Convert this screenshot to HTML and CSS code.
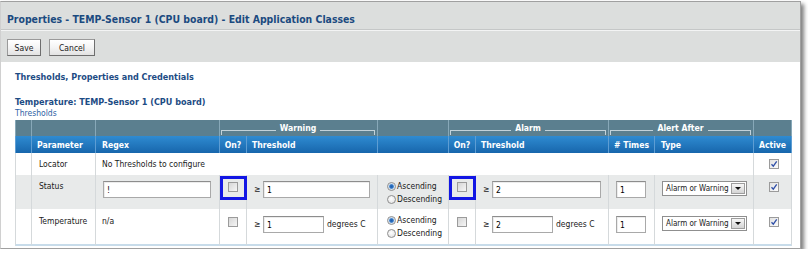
FILE: index.html
```html
<!DOCTYPE html>
<html lang="en">

<head>
    <meta charset="UTF-8">
    <title>Properties - Edit Application Classes</title>
    <link rel="stylesheet" href="styles.css">
</head>

<body>
    <div class="window">
        <div class="head">
            <div class="title">Properties - TEMP-Sensor 1 (CPU board) - Edit Application Classes</div>
            <div class="toolbar">
                <button class="btn save">Save</button>
                <button class="btn cancel">Cancel</button>
            </div>
        </div>

        <div class="content">
            <h2>Thresholds, Properties and Credentials</h2>
            <h3>Temperature: TEMP-Sensor 1 (CPU board)</h3>
            <div class="caption">Thresholds</div>

            <!-- Thresholds table -->
            <table class="grid">
                <colgroup>
                    <col style="width:16px">
                    <col style="width:64px">
                    <col style="width:124px">
                    <col style="width:27px">
                    <col style="width:131px">
                    <col style="width:71px">
                    <col style="width:27px">
                    <col style="width:133px">
                    <col style="width:46px">
                    <col style="width:99px">
                    <col style="width:39px">
                </colgroup>
                <thead>
                    <tr class="groups">
                        <th></th>
                        <th></th>
                        <th></th>
                        <th colspan="2"><div class="grp"><span>Warning</span></div></th>
                        <th></th>
                        <th colspan="2"><div class="grp"><span>Alarm</span></div></th>
                        <th colspan="2"><div class="grp"><span>Alert After</span></div></th>
                        <th class="last"></th>
                    </tr>
                    <tr class="cols">
                        <th></th>
                        <th>Parameter</th>
                        <th class="pad">Regex</th>
                        <th class="c">On?</th>
                        <th>Threshold</th>
                        <th></th>
                        <th class="c">On?</th>
                        <th>Threshold</th>
                        <th># Times</th>
                        <th class="pad">Type</th>
                        <th class="c last">Active</th>
                    </tr>
                </thead>
                <tbody>
                    <tr class="r1">
                        <td></td>
                        <td class="param">Locator</td>
                        <td colspan="8">No Thresholds to configure</td>
                        <td class="c last"><span class="cb on"><svg width="8" height="8" viewBox="0 0 8 8"><path d="M1.5 4.2 L3.3 6.2 L6.7 1.3" fill="none" stroke="#2f4fa8" stroke-width="1.3"/></svg></span></td>
                    </tr>
                    <tr class="r2">
                        <td></td>
                        <td class="param">Status</td>
                        <td class="pad"><input class="txt regex" value="!"></td>
                        <td class="c mk"><span class="mark"></span><span class="cb"></span></td>
                        <td class="pad"><div class="thr"><span class="ge">&ge;</span><input class="txt wide" value="1"></div></td>
                        <td class="dir">
                            <label class="opt"><span class="rb on"></span>Ascending</label>
                            <label class="opt"><span class="rb"></span>Descending</label>
                        </td>
                        <td class="c mk"><span class="mark"></span><span class="cb"></span></td>
                        <td class="pad"><div class="thr"><span class="ge">&ge;</span><input class="txt wide2" value="2"></div></td>
                        <td class="pad"><input class="txt times" value="1"></td>
                        <td class="pad"><div class="sel"><span class="sel-text">Alarm or Warning</span><span class="sel-btn"></span></div></td>
                        <td class="c last"><span class="cb on"><svg width="8" height="8" viewBox="0 0 8 8"><path d="M1.5 4.2 L3.3 6.2 L6.7 1.3" fill="none" stroke="#2f4fa8" stroke-width="1.3"/></svg></span></td>
                    </tr>
                    <tr class="r3">
                        <td></td>
                        <td class="param">Temperature</td>
                        <td>n/a</td>
                        <td class="c"><span class="cb"></span></td>
                        <td class="pad"><div class="thr"><span class="ge">&ge;</span><input class="txt short" value="1"><span class="unit">degrees C</span></div></td>
                        <td class="dir">
                            <label class="opt"><span class="rb on"></span>Ascending</label>
                            <label class="opt"><span class="rb"></span>Descending</label>
                        </td>
                        <td class="c"><span class="cb"></span></td>
                        <td class="pad"><div class="thr"><span class="ge">&ge;</span><input class="txt short" value="2"><span class="unit">degrees C</span></div></td>
                        <td class="pad"><input class="txt times" value="1"></td>
                        <td class="pad"><div class="sel"><span class="sel-text">Alarm or Warning</span><span class="sel-btn"></span></div></td>
                        <td class="c last"><span class="cb on"><svg width="8" height="8" viewBox="0 0 8 8"><path d="M1.5 4.2 L3.3 6.2 L6.7 1.3" fill="none" stroke="#2f4fa8" stroke-width="1.3"/></svg></span></td>
                    </tr>
                </tbody>
            </table>
        </div>
    </div>
</body>

</html>
```
FILE: styles.css
```css
/* Reset */
* {
    margin: 0;
    padding: 0;
    box-sizing: border-box;
}

body {
    font-family: "DejaVu Sans Condensed", "DejaVu Sans", sans-serif;
    font-size: 8.5px;
    color: #1a1a1a;
    background: #fff;
}

/* Window frame */
.window {
    width: 801px;
    height: 248px;
    margin-top: 1px;
    border: 1px solid #a0a0a0;
    border-left-color: #d0d0d0;
    background: #fff;
    box-shadow: 3px 3px 4px rgba(0, 0, 0, 0.5);
    overflow: hidden;
}

/* Title + toolbar */
.head {
    background-color: #dcdedd;
}

.title {
    font-size: 10.4px;
    font-weight: bold;
    color: #1b4a80;
    line-height: 13px;
    padding: 11px 6px 3px;
    border-bottom: 1px solid #c5c7c7;
}

.toolbar {
    display: flex;
    gap: 8px;
    padding: 8px 6px 6px;
    border-top: 1px solid #f3f4f4;
}

.btn {
    height: 17px;
    font-family: inherit;
    font-size: 8.5px;
    color: #1a1a1a;
    background: linear-gradient(#ffffff, #f4f4f4 50%, #e2e2e2);
    border: 1px solid #9a9a9a;
    border-right-color: #6e6e6e;
    border-bottom-color: #6e6e6e;
}

.save {
    width: 34px;
}

.cancel {
    width: 46px;
}

/* Headings */
.content {
    padding: 9px 0 0 14px;
}

h2,
h3 {
    font-size: 9px;
    font-weight: bold;
    line-height: 12px;
    color: #1d4c84;
}

h3 {
    margin-top: 13px;
}

.caption {
    line-height: 11px;
    color: #2d62a4;
    margin-bottom: 1px;
}

/* Table */
.grid {
    width: 777px;
    table-layout: fixed;
    border-collapse: separate;
    border-spacing: 0;
}

.grid th,
.grid td {
    border-left: 1px solid #d5d9db;
    text-align: left;
}

.grid .last {
    border-right: 1px solid #d5d9db;
}

.grid .c {
    text-align: center;
}

.groups th {
    height: 16px;
    padding: 0;
    background-color: #5b7f8f;
    border-left-color: #87a8b8;
}

.groups th.last {
    border-right-color: #87a8b8;
}

.grp {
    display: flex;
    align-items: flex-end;
    height: 16px;
    padding: 0 2px 1px 1px;
}

.grp::before,
.grp::after {
    content: '';
    flex: 1;
    height: 4px;
    border-top: 1px solid #c3d2d9;
    margin-bottom: 0;
}

.grp::before {
    border-left: 1px solid #c3d2d9;
}

.grp::after {
    border-right: 1px solid #c3d2d9;
}

.grp span {
    color: #fff;
    font-size: 8.6px;
    font-weight: bold;
    line-height: 11px;
    padding: 0 4px 1px;
}

.cols th {
    height: 17px;
    padding: 0 0 0 5px;
    font-size: 8.6px;
    font-weight: bold;
    color: #fff;
    background: linear-gradient(#2f8bd1, #1766ac);
    border-left-color: #5d9dd3;
}

.cols th.c {
    padding: 0;
}

.cols th.pad {
    padding-left: 6px;
}

.cols th.last {
    border-right-color: #5d9dd3;
}

/* Body rows */
.grid td {
    vertical-align: top;
    line-height: 11px;
    padding: 6px 0 0 6px;
}

.grid td.param {
    padding-left: 7px;
}

.grid td.pad {
    padding-left: 7px;
}

.grid td.c {
    padding-left: 0;
}

.grid td.last {
    padding-left: 3px;
}

.r1 td {
    height: 22px;
}

.r2 td {
    height: 34px;
    background-color: #e8eaea;
}

.r3 td {
    height: 37px;
    padding-top: 7px;
    border-bottom: 2px solid #c8dcea;
}

/* Inputs */
.txt {
    height: 17px;
    padding: 0 3px;
    font-family: inherit;
    font-size: 8.5px;
    color: #000;
    background: #fff;
    border: 1px solid #a9a9a9;
    border-top-color: #8d8d8d;
    box-shadow: inset 1px 1px 0 #ececec;
    outline: none;
}

.regex {
    width: 108px;
}

.wide {
    width: 107px;
}

.wide2 {
    width: 109px;
}

.short {
    width: 61px;
}

.times {
    width: 30px;
}

.thr {
    display: flex;
    align-items: center;
}

.ge {
    width: 9px;
}

.unit {
    margin-left: 3px;
}

/* Checkboxes */
.cb {
    display: inline-block;
    width: 10px;
    height: 10px;
    margin-top: 1px;
    border: 1px solid #9b9b9b;
    background: linear-gradient(135deg, #d6d6d6, #f6f6f6);
    vertical-align: top;
}

.cb.on {
    background: linear-gradient(135deg, #e2e2e2, #fbfbfb);
}

.cb svg {
    display: block;
}

.r1 .cb {
    margin-top: 0;
}

.mk {
    position: relative;
}

.mark {
    position: absolute;
    left: 0;
    top: 1px;
    width: 27px;
    height: 24px;
    border: 3px solid #1216e4;
}

/* Ascending / Descending */
.grid td.dir {
    padding: 5px 0 0 9px;
}

.opt {
    display: flex;
    align-items: center;
    height: 13px;
}

.rb {
    width: 9px;
    height: 9px;
    margin-right: 1px;
    border: 1px solid #8e8e8e;
    border-radius: 50%;
    background: radial-gradient(circle at 45% 40%, #ffffff, #dcdcdc);
}

.rb.on {
    background: radial-gradient(circle, #1f5fae 0, #2f74c4 1.8px, #bcd3ea 2.6px, #f2f2f2 3.6px);
}

/* Fake select */
.sel {
    display: flex;
    align-items: center;
    width: 85px;
    height: 15px;
    font-size: 8px;
    background: #fff;
    border: 1px solid #8f8f8f;
}

.sel-text {
    flex: 1;
    padding-left: 3px;
    white-space: nowrap;
    overflow: hidden;
}

.sel-btn {
    position: relative;
    width: 14px;
    height: 11px;
    margin-right: 1px;
    border: 1px solid #9d9d9d;
    background: linear-gradient(#f7f7f7, #d4d4d4);
}

.sel-btn::after {
    content: '';
    position: absolute;
    left: 3px;
    top: 3px;
    border-left: 3px solid transparent;
    border-right: 3px solid transparent;
    border-top: 3px solid #111;
}
```
